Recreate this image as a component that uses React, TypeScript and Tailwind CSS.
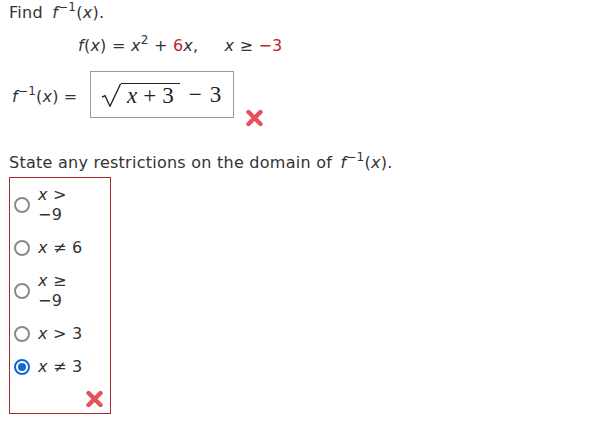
const ink = "text-[#333333]";

function WrongMark({ className = "" }: { className?: string }) {
  return (
    <svg width="19" height="18" viewBox="0 0 19 18" className={className} aria-hidden="true">
      <path d="M3.5 3 L15.5 15 M15.5 3 L3.5 15" stroke="#e5505a" strokeWidth="4.4" strokeLinecap="round" />
    </svg>
  );
}

function Radio({ checked }: { checked?: boolean }) {
  if (checked) {
    return (
      <span className="flex h-[16px] w-[16px] flex-shrink-0 items-center justify-center rounded-full border-[2px] border-[#1366d6]">
        <span className="h-[8px] w-[8px] rounded-full bg-[#1366d6]" />
      </span>
    );
  }
  return <span className="h-[16px] w-[16px] flex-shrink-0 rounded-full border-[2px] border-[#8a8a8a] bg-white" />;
}

function Sup({ children }: { children: React.ReactNode }) {
  return <span className="relative -top-[7px] text-[12px] leading-none">{children}</span>;
}

function FInv({ className = "" }: { className?: string }) {
  return (
    <span className={className}>
      <i>f</i>
      <Sup>−1</Sup>(<i>x</i>)
    </span>
  );
}

const options: { lines: string[]; checked?: boolean }[] = [
  { lines: ["x >", "−9"] },
  { lines: ["x ≠ 6"] },
  { lines: ["x ≥", "−9"] },
  { lines: ["x > 3"] },
  { lines: ["x ≠ 3"], checked: true },
];

function Label({ text }: { text: string }) {
  if (text.startsWith("x")) {
    return (
      <span>
        <i>x</i>
        {text.slice(1)}
      </span>
    );
  }
  return <span>{text}</span>;
}

// typeset answer: sqrt(x + 3) - 3
function AnswerBox() {
  return (
    <div className="flex h-[47px] w-[144px] items-center border border-[#9a9a9a] pl-[10px] font-['Liberation_Serif',serif] text-[23px] tracking-normal text-[#222]">
      <span className="flex items-start">
        <svg width="20" height="24" viewBox="0 0 20 24" aria-hidden="true">
          <path d="M1 14.2 L4 12.6 L9 23.2 L19.6 0.7" fill="none" stroke="#222" strokeWidth="1.35" />
        </svg>
        <span className="flex items-baseline border-t-[1.35px] border-[#222] pl-[6px] pr-[6px] leading-[23px]">
          <i>x</i>
          <span className="ml-[6px]">+</span>
          <span className="ml-[6px]">3</span>
        </span>
      </span>
      <span className="ml-[9px] mt-[1px]">−</span>
      <span className="ml-[8px] mt-[1px]">3</span>
    </div>
  );
}

export default function App() {
  return (
    <div
      className={`h-[432px] w-[612px] bg-white ${ink} font-['DejaVu_Sans',Verdana,sans-serif] text-[16px] leading-[20px] tracking-[0.25px]`}
    >
      <div className="px-[9px] pt-[3px]">
        <div>
          Find <FInv className="ml-[4px]" />.
        </div>
        <div className="mt-[13px] pl-[69px]">
          <i>f</i>(<i>x</i>) = <i>x</i>
          <Sup>2</Sup> + <span className="text-[#c0272d]">6</span>
          <i>x</i>,<span className="inline-block w-[26px]" />
          <i>x</i> ≥ <span className="text-[#c0272d]">−3</span>
        </div>

        <div className="mt-[15px] flex h-[47px] items-start">
          <div className="mt-[16px] flex w-[81px] items-center pl-[3px]">
            <FInv />
            <span className="ml-[5px]">=</span>
          </div>
          <AnswerBox />
          <WrongMark className="ml-[11px] mt-[38px]" />
        </div>

        <div className="mt-[35px]">
          State any restrictions on the domain of <FInv className="ml-[3px]" />.
        </div>

        <div className="mt-[4px] flex w-[102px] flex-col border border-[#a3282e] pb-[5px] pl-[4px] pt-[7px]">
          {options.map((o, i) => (
            <div key={i} className={`flex items-center gap-[8px] ${i === 0 ? "" : "mt-[13px]"}`}>
              <Radio checked={o.checked} />
              <div className="flex flex-col">
                {o.lines.map((l, j) => (
                  <Label key={j} text={l} />
                ))}
              </div>
            </div>
          ))}
          <div className="mt-[13px] flex justify-end pr-[6px]">
            <WrongMark />
          </div>
        </div>
      </div>
    </div>
  );
}
